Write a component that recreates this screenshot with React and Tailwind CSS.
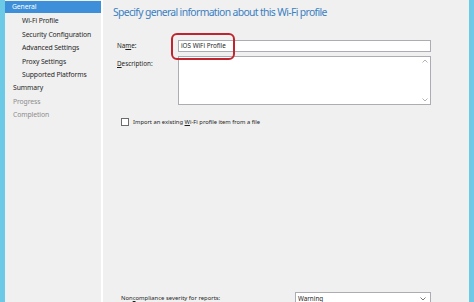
export default function App() {
  const font = { fontFamily: '"Noto Sans", "Open Sans", sans-serif' }
  const steps = [
    { label: 'Wi-Fi Profile', sub: true },
    { label: 'Security Configuration', sub: true },
    { label: 'Advanced Settings', sub: true },
    { label: 'Proxy Settings', sub: true },
    { label: 'Supported Platforms', sub: true },
    { label: 'Summary' },
    { label: 'Progress', muted: true },
    { label: 'Completion', muted: true },
  ]

  return (
    <div className="w-[474px] h-[302px] flex overflow-hidden bg-[#f0f0f0] text-[#1e1e1e]" style={font}>
      <div className="w-[5px] bg-[#6ccae7]" />

      {/* Wizard steps */}
      <div className="w-[96px] bg-[#f0f0f0] text-[6.8px] leading-[13.4px] tracking-[-0.1px]">
        <div className="mt-[1px] h-[12px] bg-[#3c8fd8] text-white pl-[7px] leading-[12px]">General</div>
        <div className="mt-[1.3px]">
          {steps.map(s => (
            <div
              key={s.label}
              className={`whitespace-nowrap ${s.sub ? 'pl-[17px]' : 'pl-[8px]'} ${s.muted ? 'text-[#8c8c8c]' : 'text-[#262626]'}`}
            >
              {s.label}
            </div>
          ))}
        </div>
      </div>
      <div className="w-[2px] bg-white" />

      {/* Page */}
      <div className="flex-1 relative flex flex-col pl-[14px] pr-[38px]">
        <h1 className="text-[10.4px] leading-[14px] tracking-[-0.65px] text-[#3a7fc2] pt-[5px] -ml-[4px] whitespace-nowrap">
          Specify general information about this Wi-Fi profile
        </h1>

        <div className="mt-[21px] flex items-center h-[12px]">
          <span className="w-[61px] text-[6.3px]">Na<u>m</u>e:</span>
          <div className="flex-1 h-[12px] bg-white border border-[#abadb3] text-[6.3px] leading-[10px] pl-[2px]">iOS WiFi Profile</div>
        </div>

        <div className="mt-[4px] flex">
          <span className="w-[61px] text-[6.3px] pt-[3px]"><u>D</u>escription:</span>
          <div className="flex-1 h-[49px] bg-white border border-[#abadb3] flex justify-end">
            <div className="w-[10px] flex flex-col justify-between items-center py-[2px] text-[#a0a0a0]">
              <svg width="6" height="4" viewBox="0 0 6 4"><path d="M0.5 3.5L3 1L5.5 3.5" fill="none" stroke="currentColor" strokeWidth="0.8" /></svg>
              <svg width="6" height="4" viewBox="0 0 6 4"><path d="M0.5 0.5L3 3L5.5 0.5" fill="none" stroke="currentColor" strokeWidth="0.8" /></svg>
            </div>
          </div>
        </div>

        <label className="mt-[13px] ml-[4px] flex items-center gap-[4px] text-[5.8px]">
          <span className="w-[8px] h-[8px] bg-white border border-[#6b6b6b]" />
          <span>Import an existing <u>W</u>i-Fi profile item from a file</span>
        </label>

        <div className="mt-[165px] flex items-start ml-[4px]">
          <span className="w-[174px] text-[5.9px] pt-[2px] whitespace-nowrap">Non<u>c</u>ompliance severity for reports:</span>
          <div className="flex-1 h-[14px] bg-white border border-[#abadb3] flex items-center justify-between px-[2px] text-[6.3px]">
            <span>Warning</span>
            <svg width="6" height="4" viewBox="0 0 6 4" className="mr-[2px]"><path d="M0.5 0.5L3 3L5.5 0.5" fill="none" stroke="#555" strokeWidth="0.8" /></svg>
          </div>
        </div>

        {/* annotation */}
        <div className="absolute left-[68px] top-[33px] w-[64px] h-[27px] border-[2.5px] border-[#c0252f] rounded-[6px]" />
      </div>

      <div className="w-[5px] bg-[#6ccae7]" />
    </div>
  )
}
